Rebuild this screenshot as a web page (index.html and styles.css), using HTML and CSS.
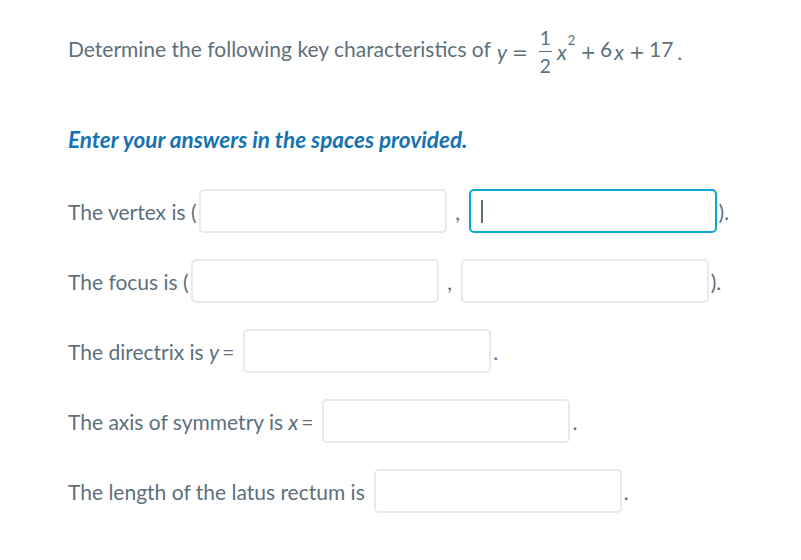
FILE: index.html
```html
<!DOCTYPE html>
<html lang="en">
<head>
  <meta charset="UTF-8" />
  <title>Parabola</title>
  <link rel="stylesheet" href="styles.css">
</head>
<body>
  <div class="question">
    <p class="stem">Determine the following key characteristics of <span class="math"><i>y</i><span class="op">=</span><span class="frac"><span>1</span><span class="bar"></span><span>2</span></span><i>x</i><sup>2</sup><span class="op">+</span>6<i class="tight">x</i><span class="op">+</span>17<span class="dot">.</span></span></p>

    <p class="prompt">Enter your answers in the spaces provided.</p>

    <div class="row">
      <span>The vertex is (</span>
      <div class="box"></div>
      <span class="comma">,</span>
      <div class="box active"><span class="caret"></span></div>
      <span>).</span>
    </div>

    <div class="row">
      <span>The focus is (</span>
      <div class="box"></div>
      <span class="comma">,</span>
      <div class="box"></div>
      <span>).</span>
    </div>

    <div class="row">
      <span class="lead">The directrix is <i>y</i>=</span>
      <div class="box"></div>
      <span>.</span>
    </div>

    <div class="row">
      <span class="lead">The axis of symmetry is <i>x</i>=</span>
      <div class="box"></div>
      <span>.</span>
    </div>

    <div class="row">
      <span class="lead">The length of the latus rectum is</span>
      <div class="box"></div>
      <span>.</span>
    </div>
  </div>
</body>
</html>
```

FILE: styles.css
```css
body {
  margin: 0;
  background: #fff;
  font-family: Lato, sans-serif;
  color: #5d707c;
}
.question {
  padding: 19px 68px 0;
}
.stem {
  margin: 0;
  font-size: 21px;
  line-height: 60px;
  height: 60px;
}
.math {
  display: inline-block;
  vertical-align: middle;
  line-height: 24px;
  margin-left: 1px;
}
.math > * {
  display: inline-block;
  vertical-align: middle;
}
.math i {
  margin-right: 1px;
}
.math i.tight {
  margin-left: 2px;
}
.op {
  margin: 0 4px;
  font-family: "DejaVu Sans", sans-serif;
  font-size: 19px;
}
.frac {
  text-align: center;
  font-size: 19px;
  line-height: 20px;
  margin: 0 5px 0 7px;
}
.frac span {
  display: block;
}
.frac .bar {
  width: 13px;
  height: 1px;
  background: #5d707c;
  margin: 3px 0 4px;
}
.math sup {
  font-size: 13px;
  line-height: 13px;
  vertical-align: 12px;
  margin-right: 1px;
}
.dot {
  margin-left: 4px;
}
.prompt {
  margin: 47px 0 35px;
  line-height: 28px;
  font-size: 22.5px;
  font-weight: bold;
  font-style: italic;
  color: #1673b2;
}
.row {
  display: flex;
  align-items: center;
  height: 44px;
  margin-bottom: 26px;
  font-size: 21px;
}
.row i {
  margin-right: 3px;
}
.lead {
  margin-right: 7px;
}
.box {
  box-sizing: border-box;
  width: 248px;
  height: 44px;
  border: 2px solid #e9e9e9;
  border-radius: 5px;
  margin: 0 2px;
  position: relative;
}
.box.active {
  border-color: #0ba6d6;
}
.comma {
  width: 18px;
  text-align: center;
}
.caret {
  position: absolute;
  left: 10px;
  top: 9px;
  width: 2px;
  height: 23px;
  background: #5d707c;
}
```
